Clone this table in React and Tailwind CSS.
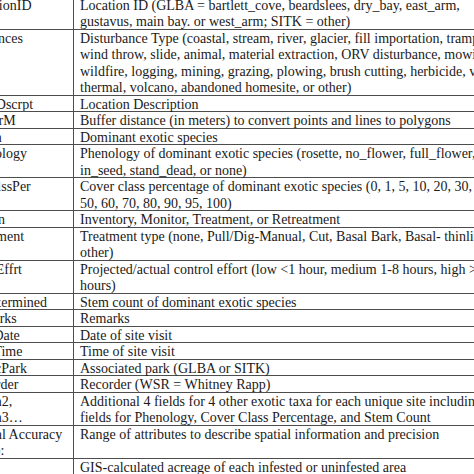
import React from "react";

const rows = [
  { k: ["LocationID"], v: ["Location ID (GLBA = bartlett_cove, beardslees, dry_bay, east_arm,", "gustavus, main bay. or west_arm; SITK = other)"], h: "h-[33px]" },
  { k: ["Dstrbnces"], v: ["Disturbance Type (coastal, stream, river, glacier, fill importation, trampling,", "wind throw, slide, animal, material extraction, ORV disturbance, mowing,", "wildfire, logging, mining, grazing, plowing, brush cutting, herbicide, vehicle,", "thermal, volcano, abandoned homesite, or other)"], h: "h-[66px]" },
  { k: ["LocnDscrpt"], v: ["Location Description"], h: "h-[16.5px]" },
  { k: ["BufferM"], v: ["Buffer distance (in meters) to convert points and lines to polygons"], h: "h-[16.5px]" },
  { k: ["Taxon"], v: ["Dominant exotic species"], h: "h-[16.5px]" },
  { k: ["Phenology"], v: ["Phenology of dominant exotic species (rosette, no_flower, full_flower,", "in_seed, stand_dead, or none)"], h: "h-[33px]" },
  { k: ["CvrClssPer"], v: ["Cover class percentage of dominant exotic species (0, 1, 5, 10, 20, 30, 40,", "50, 60, 70, 80, 90, 95, 100)"], h: "h-[33px]" },
  { k: ["Action"], v: ["Inventory, Monitor, Treatment, or Retreatment"], h: "h-[16.5px]" },
  { k: ["Treatment"], v: ["Treatment type (none, Pull/Dig-Manual, Cut, Basal Bark, Basal- thinline,", "other)"], h: "h-[33px]" },
  { k: ["CntrlEffrt"], v: ["Projected/actual control effort (low <1 hour, medium 1-8 hours, high >8", "hours)"], h: "h-[33px]" },
  { k: ["Undetermined"], v: ["Stem count of dominant exotic species"], h: "h-[16.5px]" },
  { k: ["Remarks"], v: ["Remarks"], h: "h-[16.5px]" },
  { k: ["VisitDate"], v: ["Date of site visit"], h: "h-[16.5px]" },
  { k: ["VisitTime"], v: ["Time of site visit"], h: "h-[16.5px]" },
  { k: ["AssocPark"], v: ["Associated park (GLBA or SITK)"], h: "h-[16.5px]" },
  { k: ["Recorder"], v: ["Recorder (WSR = Whitney Rapp)"], h: "h-[16.5px]" },
  { k: ["Taxon2,", "Taxon3…"], v: ["Additional 4 fields for 4 other exotic taxa for each unique site including", "fields for Phenology, Cover Class Percentage, and Stem Count"], h: "h-[33px]" },
  { k: ["Spatial Accuracy", "Attrib:"], v: ["Range of attributes to describe spatial information and precision"], h: "h-[33px]" },
  { k: ["Acre"], v: ["GIS-calculated acreage of each infested or uninfested area"], h: "h-[33px]" },
];

export default function App() {
  return (
    <div className="w-[474px] h-[474px] overflow-hidden bg-white">
      <div
        className="w-[620px] ml-[-38px] mt-[-3.5px] text-[14px] leading-[16.5px] text-[#1a1a1a]"
        style={{ fontFamily: '"Liberation Serif", "Times New Roman", serif' }}
      >
        {rows.map((r, i) => (
          <div key={i} className={`flex ${r.h} border-b border-[#4d4d4d]`}>
            <div className="w-[112px] shrink-0 border-r border-[#4d4d4d] pl-[5px] pt-[1px] whitespace-nowrap overflow-hidden">
              {r.k.map((t, j) => (
                <div key={j}>{t}</div>
              ))}
            </div>
            <div className="flex-1 pl-[6px] pt-[1px] whitespace-nowrap">
              {r.v.map((t, j) => (
                <div key={j}>{t}</div>
              ))}
            </div>
          </div>
        ))}
      </div>
    </div>
  );
}
